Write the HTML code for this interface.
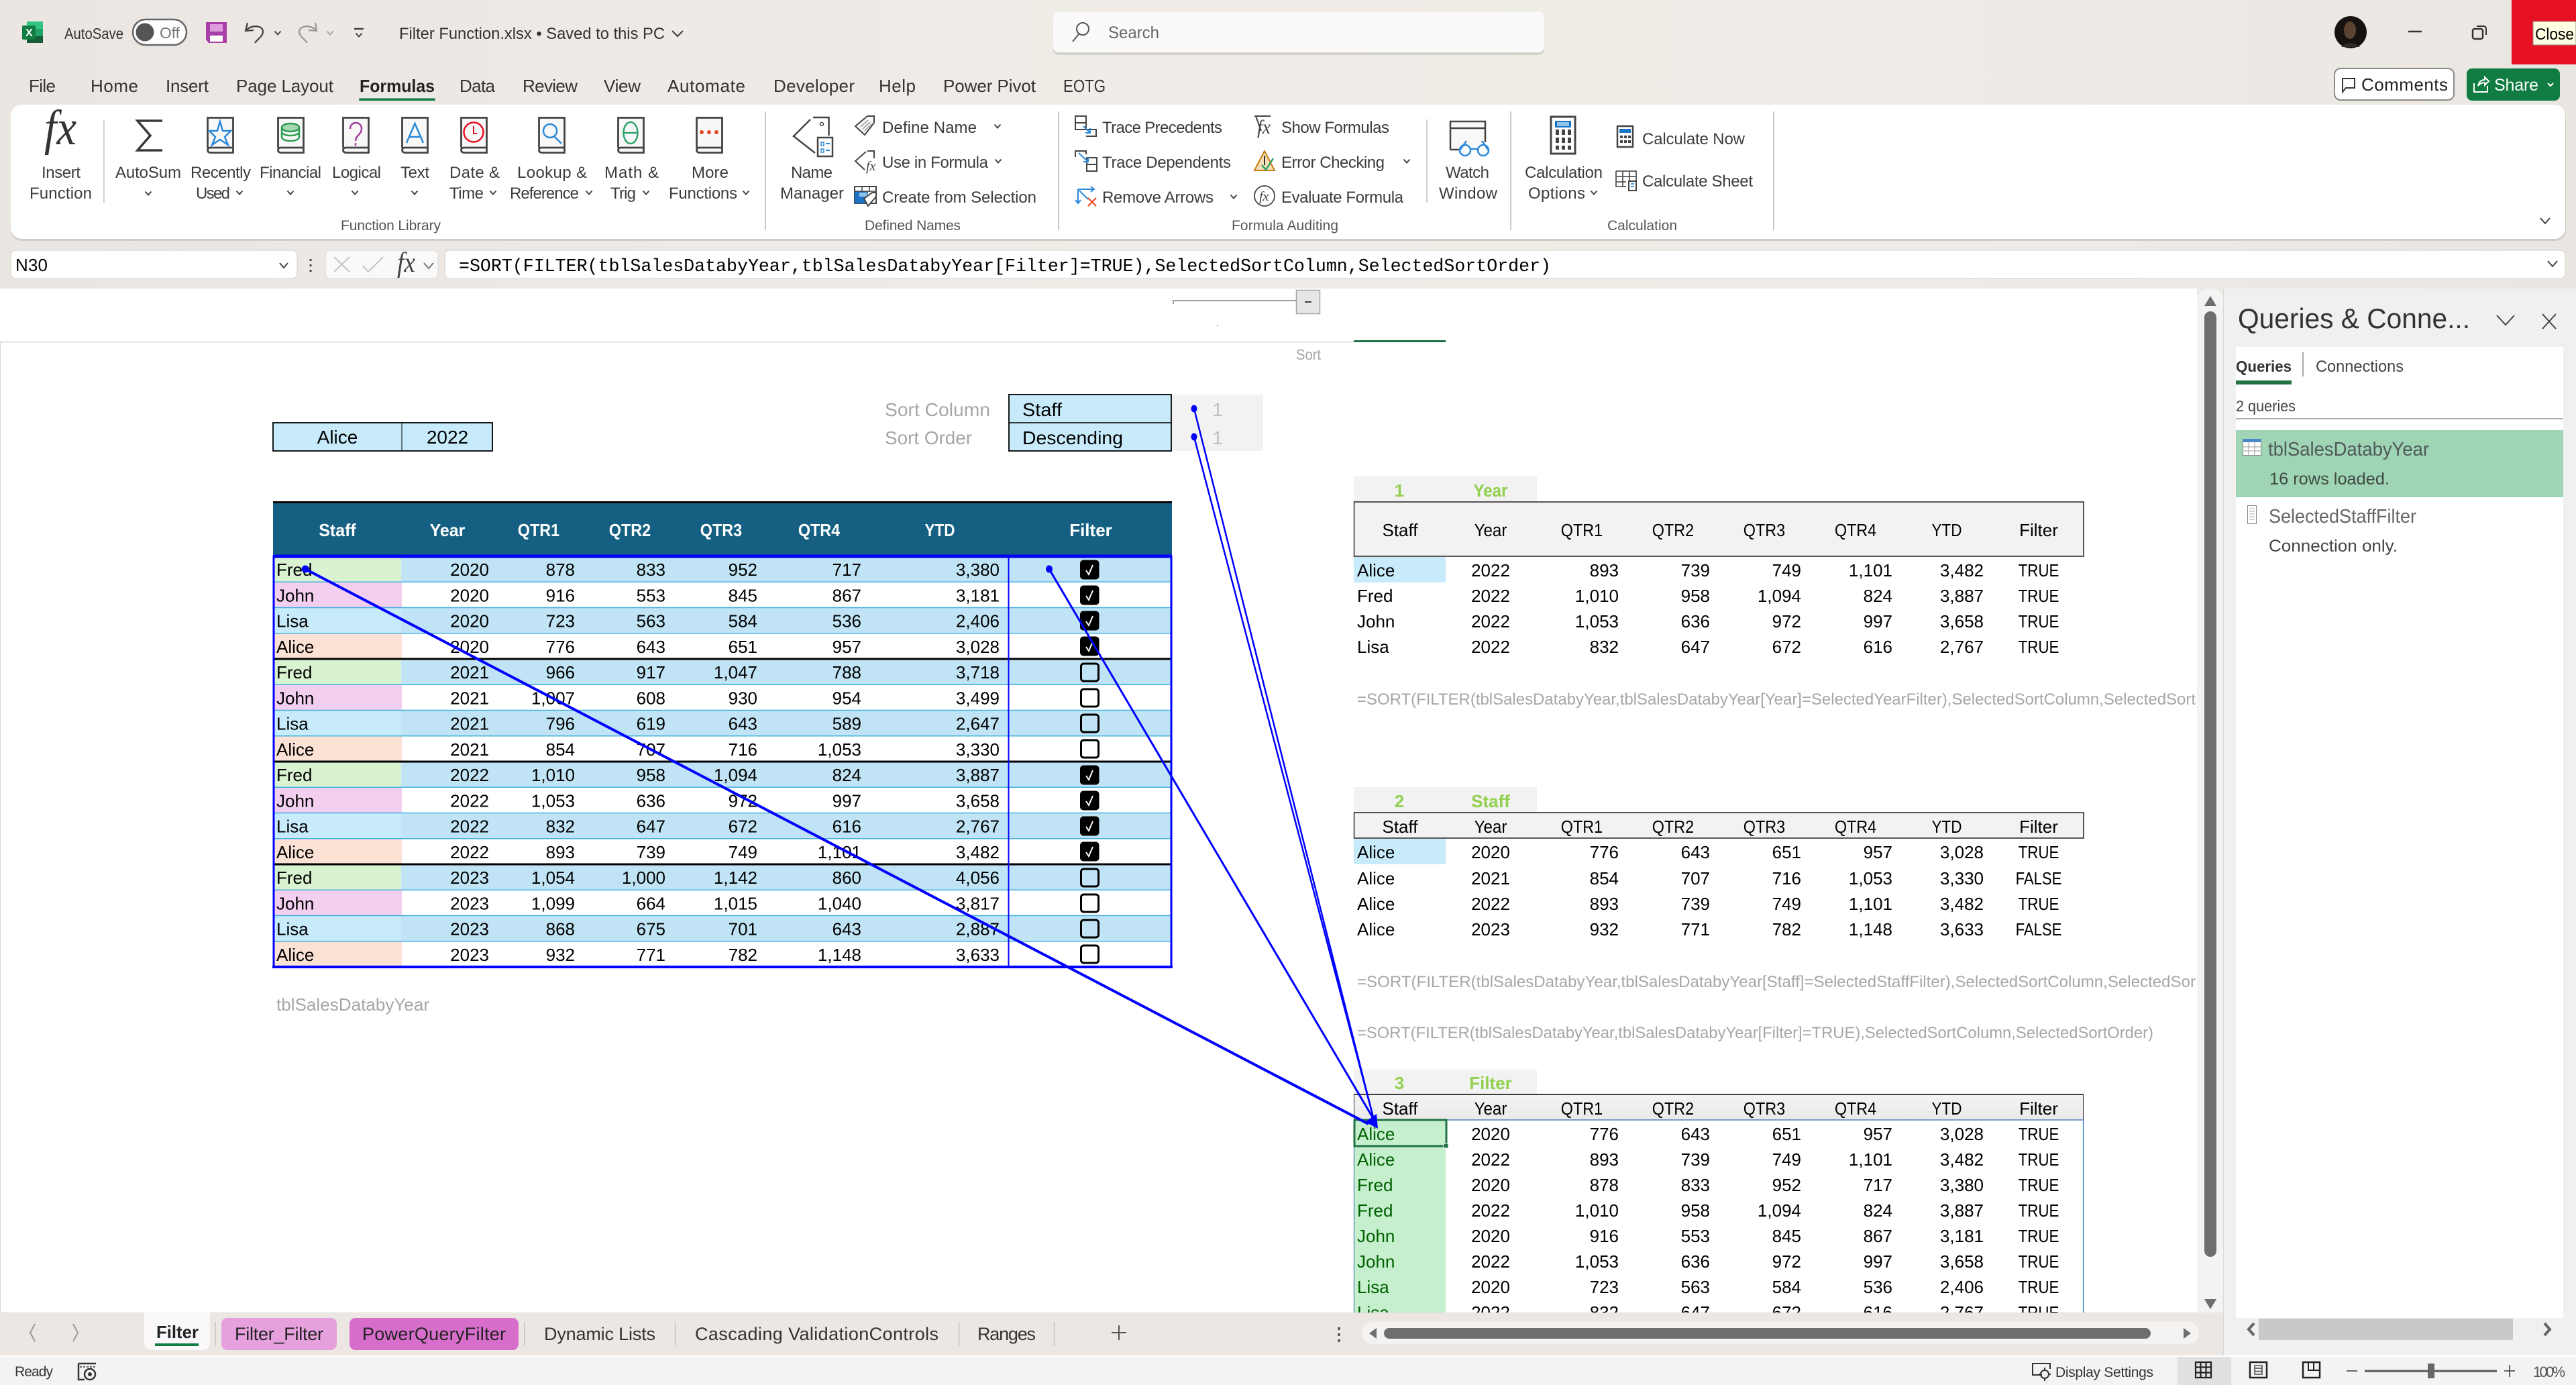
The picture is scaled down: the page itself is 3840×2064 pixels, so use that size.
<!DOCTYPE html>
<html lang="en"><head><meta charset="utf-8"><title>Filter Function.xlsx</title>
<style>
html,body{margin:0;padding:0;background:#fff;width:3840px;height:2064px;overflow:hidden}
svg{display:block}
text{font-family:"Liberation Sans",sans-serif;fill:#000;font-size:26px;white-space:pre}
.r{text-anchor:end}.c{text-anchor:middle}.b{font-weight:700}
.w{fill:#fff}
.u text,text.u{font-size:24px;fill:#3c3c3c}
.t text{font-size:26px;fill:#333}
.g text{font-size:21px;fill:#555}
.s text{font-size:27px;fill:#333}
.gy{fill:#a6a6a6}.lg{fill:#bfbfbf}.gn{fill:#92d050;font-weight:700}
.dk{fill:#006100}
.ic{fill:none;stroke:#444;stroke-width:2.5}
.bl{fill:none;stroke:#2b88d8;stroke-width:2.5}
.q,.q2,.q3,.q4,.q5,.q6{transform-box:fill-box;transform-origin:center}
.q{transform:scaleX(.9)}.q2{transform:scaleX(.865)}.q3{transform:scaleX(.86)}.q4{transform:scaleX(.85)}.q5{transform:scaleX(.93)}.q6{transform:scaleX(.96)}
.f28{font-size:28px}
</style></head><body>
<svg xmlns="http://www.w3.org/2000/svg" width="3840" height="2064" viewBox="0 0 3840 2064">
<defs>
<linearGradient id="bg" x1="0" x2="1" y1="0" y2="0"><stop offset="0" stop-color="#ebe6e2"/><stop offset=".45" stop-color="#f1ece7"/><stop offset=".75" stop-color="#f0ebe6"/><stop offset="1" stop-color="#eae6e2"/></linearGradient>
<linearGradient id="h3" x1="0" x2="0" y1="0" y2="1"><stop offset="0" stop-color="#f4f4f4"/><stop offset="1" stop-color="#e9e9e9"/></linearGradient>
<path id="ch" d="M-4.5 -2.5L0 2.5L4.5 -2.5" fill="none" stroke="#444" stroke-width="2"/>
<path id="book" d="M1.5 46V1.5H39.5V53.5H6Q1.5 53.5 1.5 49.5Q1.5 46 6 46H39.5" fill="#f8f8f8" stroke="#444" stroke-width="2.8"/>
<g id="on"><rect x="-14" y="-14.500" width="28.500" height="29" rx="5" fill="#000"/><path d="M-5 1L-1 7L5 -7" fill="none" stroke="#fff" stroke-width="2"/></g>
<rect id="off" x="-12.500" y="-13" width="26" height="26" rx="4" fill="none" stroke="#000" stroke-width="3"/>
<clipPath id="fc"><rect x="2018" y="1000" width="1255" height="500"/></clipPath>
<clipPath id="gc"><rect x="0" y="430" width="3275" height="1526"/></clipPath>
</defs>

<!-- chrome background -->
<rect width="3840" height="2064" fill="url(#bg)"/>

<!-- title bar -->
<rect x="40" y="32" width="24" height="11" fill="#33c481"/><rect x="40" y="43" width="24" height="11" fill="#21a366"/><rect x="40" y="54" width="24" height="10" fill="#185c37"/>
<rect x="33" y="38" width="20" height="21" rx="2" fill="#107c41"/><text x="38" y="54" class="b w" style="font-size:16px">X</text>
<text x="96" y="58" textLength="88" lengthAdjust="spacingAndGlyphs" style="font-size:23px;fill:#333">AutoSave</text>
<rect x="198" y="29" width="80" height="38" rx="19" fill="#fff" stroke="#666" stroke-width="2.500"/><circle cx="216" cy="48" r="13.500" fill="#555"/>
<text x="238" y="57" textLength="30" lengthAdjust="spacingAndGlyphs" style="font-size:23px;fill:#777">Off</text>
<path d="M307 33H338V64H311L307 59Z" fill="#a83fa8"/><rect x="313" y="36" width="19" height="11" fill="#dd9ddd"/><rect x="313" y="53" width="19" height="9" fill="#fff"/>
<path d="M369 34L366 46L378 45M367 45C376 36 392 38 392 47C392 54 384 58 380 64" fill="none" stroke="#444" stroke-width="2.300"/>
<use href="#ch" x="414" y="49"/>
<path d="M470 34L472 46L460 45M471 45C462 36 447 38 446 47C446 54 454 58 458 64" fill="none" stroke="#9a9a9a" stroke-width="2.300"/>
<use href="#ch" x="492" y="49" opacity=".4"/>
<path d="M528 43H542" stroke="#444" stroke-width="2.500"/><use href="#ch" x="535" y="52"/>
<text x="595" y="58" textLength="396" lengthAdjust="spacingAndGlyphs" style="font-size:24px;fill:#333">Filter Function.xlsx • Saved to this PC</text>
<path d="M1002 46L1010 54L1018 46" fill="none" stroke="#444" stroke-width="2.200"/>

<rect x="1570" y="20" width="732" height="62" rx="8" fill="#d5d2cf"/><rect x="1570" y="18" width="732" height="60" rx="8" fill="#fafafa"/>
<circle cx="1614" cy="43" r="9" fill="none" stroke="#555" stroke-width="2"/><path d="M1608 51L1599 62" stroke="#555" stroke-width="2"/>
<text x="1652" y="57" textLength="76" lengthAdjust="spacingAndGlyphs" style="font-size:25px;fill:#666">Search</text>

<circle cx="3504" cy="48" r="24" fill="#17120f"/><ellipse cx="3503" cy="45" rx="9" ry="13" fill="#5a4330"/><path d="M3490 70Q3504 58 3518 70" fill="#2f2a26"/>
<path d="M3590 47H3610" stroke="#333" stroke-width="2.500"/>
<rect x="3686" y="43" width="15" height="15" rx="3" fill="none" stroke="#333" stroke-width="2.500"/><path d="M3692 39H3702Q3706 39 3706 43V52" fill="none" stroke="#333" stroke-width="2"/>
<rect x="3744" width="96" height="96" fill="#e81123"/>
<rect x="3776" y="32" width="64" height="35" fill="#ffffe1" stroke="#8a8a8a"/><text x="3779" y="59" textLength="58" lengthAdjust="spacingAndGlyphs" style="font-size:24px">Close</text>

<!-- tabs -->
<g class="t">
<text x="43" y="137" textLength="40">File</text><text x="135" y="137" textLength="71">Home</text><text x="247" y="137" textLength="64">Insert</text><text x="352" y="137" textLength="145">Page Layout</text>
<text x="536" y="137" textLength="112" lengthAdjust="spacingAndGlyphs" class="b" style="fill:#222">Formulas</text><text x="685" y="137" textLength="53">Data</text><text x="779" y="137" textLength="82">Review</text><text x="900" y="137" textLength="55">View</text><text x="995" y="137" textLength="116">Automate</text><text x="1153" y="137" textLength="121">Developer</text><text x="1310" y="137" textLength="55">Help</text><text x="1406" y="137" textLength="138">Power Pivot</text><text x="1585" y="137" textLength="63" lengthAdjust="spacingAndGlyphs">EOTG</text>
</g>
<rect x="535" y="146.500" width="114" height="3.500" rx="1.500" fill="#107c41"/>

<rect x="3480" y="102" width="178" height="47" rx="9" fill="#fff" stroke="#8a8a8a" stroke-width="2"/>
<path d="M3491 117H3510V131H3497L3492 137V117Z" fill="none" stroke="#333" stroke-width="2"/>
<text x="3520" y="135" textLength="129" style="font-size:26px;fill:#222">Comments</text>
<rect x="3677" y="102" width="139" height="48" rx="8" fill="#107c41"/>
<path d="M3688 124V137H3708V128M3694 128Q3696 119 3704 119V115L3710 121L3704 127V123Q3698 123 3694 128Z" fill="none" stroke="#fff" stroke-width="2"/>
<text x="3718" y="135" textLength="66" class="w" style="font-size:25px">Share</text>
<path d="M3798 124L3802 128L3806 124" fill="none" stroke="#fff" stroke-width="2"/>

<!-- ribbon -->
<rect x="16" y="158" width="3809" height="201" rx="16" fill="#d0ccc8"/>
<rect x="16" y="156" width="3808" height="200" rx="16" fill="#fff"/>
<path d="M3787 325L3794 333L3801 325" fill="none" stroke="#444" stroke-width="2"/>
<path d="M155 178V302M2127 178V302" stroke="#d0d0d0" stroke-width="2"/>
<path d="M1141 166V343M1578 166V343M2252 166V343M2644 166V343" stroke="#c8c8c8" stroke-width="2"/>

<text x="66" y="215" textLength="48" lengthAdjust="spacingAndGlyphs" style="font-family:'Liberation Serif',serif;font-style:italic;font-size:74px;fill:#333">fx</text>
<path d="M242 180H205L224 202L205 224H242" fill="none" stroke="#3a3a3a" stroke-width="3.500"/>
<use href="#book" x="308" y="174"/><use href="#book" x="413" y="174"/><use href="#book" x="510" y="174"/><use href="#book" x="598" y="174"/><use href="#book" x="686" y="174"/><use href="#book" x="802" y="174"/><use href="#book" x="920" y="174"/><use href="#book" x="1037" y="174"/>
<path d="M328 181L332 195L344 195L335 204L340 216L328 208L316 216L321 204L312 195L324 195Z" class="bl"/>
<ellipse cx="433" cy="190" rx="13" ry="6" fill="#a5d6b0" stroke="#2a9d4f" stroke-width="2.500"/><path d="M420 190V196C420 204 446 204 446 196V190M420 198V204C420 212 446 212 446 204V198" fill="none" stroke="#2a9d4f" stroke-width="2.500"/>
<path d="M522 192C522 180 539 180 539 192C539 200 530 202 530 210M530 213V217" fill="none" stroke="#a33ea1" stroke-width="2.500"/>
<path d="M606 213L618.500 184L631 213M610 204H627" class="bl"/>
<circle cx="706" cy="197" r="14.500" fill="none" stroke="#e81123" stroke-width="2.500"/><path d="M706 188V199H711" fill="none" stroke="#e81123" stroke-width="2"/>
<circle cx="820" cy="195" r="10" class="bl"/><path d="M826 203L837 214" class="bl"/>
<ellipse cx="940" cy="198" rx="10.500" ry="16" fill="none" stroke="#2ea36a" stroke-width="2.500"/><path d="M929 198H951" stroke="#2ea36a" stroke-width="2.500"/>
<circle cx="1046" cy="197" r="3" fill="#e04a2a"/><circle cx="1057" cy="197" r="3" fill="#e04a2a"/><circle cx="1068" cy="197" r="3" fill="#e04a2a"/>

<g class="u">
<text x="62" y="265" textLength="58">Insert</text><text x="44" y="296" textLength="93">Function</text>
<text x="172" y="265" textLength="98">AutoSum</text>
<text x="284" y="265" textLength="90">Recently</text><text x="292" y="296" textLength="51">Used</text>
<text x="387" y="265" textLength="92">Financial</text><text x="495" y="265" textLength="73">Logical</text><text x="597" y="265" textLength="43">Text</text>
<text x="670" y="265" textLength="75">Date &amp;</text><text x="670" y="296" textLength="51">Time</text>
<text x="771" y="265" textLength="104">Lookup &amp;</text><text x="760" y="296" textLength="103">Reference</text>
<text x="901" y="265" textLength="81">Math &amp;</text><text x="910" y="296" textLength="38">Trig</text>
<text x="1031" y="265" textLength="55">More</text><text x="997" y="296" textLength="102">Functions</text>
<text x="1179" y="265" textLength="62">Name</text><text x="1163" y="296" textLength="95">Manager</text>
<text x="1315" y="198" textLength="141">Define Name</text><text x="1315" y="250" textLength="158">Use in Formula</text><text x="1315" y="302" textLength="230">Create from Selection</text>
<text x="1643" y="198" textLength="179">Trace Precedents</text><text x="1643" y="250" textLength="192">Trace Dependents</text><text x="1643" y="302" textLength="166">Remove Arrows</text>
<text x="1910" y="198" textLength="161">Show Formulas</text><text x="1910" y="250" textLength="154">Error Checking</text><text x="1910" y="302" textLength="182">Evaluate Formula</text>
<text x="2155" y="265" textLength="65">Watch</text><text x="2145" y="296" textLength="87">Window</text>
<text x="2273" y="265" textLength="116">Calculation</text><text x="2278" y="296" textLength="85">Options</text>
<text x="2448" y="215" textLength="153">Calculate Now</text><text x="2448" y="278" textLength="165">Calculate Sheet</text>
</g>
<g class="g">
<text x="508" y="343" textLength="149">Function Library</text><text x="1289" y="343" textLength="143">Defined Names</text><text x="1836" y="343" textLength="159">Formula Auditing</text><text x="2396" y="343" textLength="104">Calculation</text>
</g>
<use href="#ch" x="221" y="288"/><use href="#ch" x="357" y="287"/><use href="#ch" x="433" y="287"/><use href="#ch" x="529" y="287"/><use href="#ch" x="618" y="287"/><use href="#ch" x="735" y="287"/><use href="#ch" x="878" y="287"/><use href="#ch" x="963" y="287"/><use href="#ch" x="1112" y="287"/>
<use href="#ch" x="1487" y="188"/><use href="#ch" x="1488" y="240"/><use href="#ch" x="1839" y="293"/><use href="#ch" x="2097" y="240"/><use href="#ch" x="2376" y="287"/>

<!-- Name Manager icon -->
<path d="M1212 175H1235.500V202M1208 178L1183 203L1215 228" class="ic"/><circle cx="1225" cy="185" r="2.500" class="ic" style="stroke-width:1.500"/>
<rect x="1219" y="205" width="22" height="28" fill="#fff" stroke="#444" stroke-width="2.500"/><path d="M1224 212h4v5h-4zM1224 222h4v5h-4z" fill="none" stroke="#2b88d8" stroke-width="1.500"/><path d="M1231 214h6M1231 224h6" stroke="#2b88d8" stroke-width="2"/>
<!-- Defined names small icons -->
<path d="M1275 188L1293 173H1303V183L1289 201Z" fill="#f5f5f5" stroke="#444" stroke-width="2"/><path d="M1283 189L1294 179M1286 192L1297 182M1289 195L1299 185" stroke="#999" stroke-width="1.500"/>
<path d="M1291 226L1275 240L1289 253M1293 225H1303V236" class="ic" style="stroke-width:2"/>
<text x="1291" y="254" style="font-family:'Liberation Serif',serif;font-style:italic;font-size:20px;fill:#444">fx</text>
<rect x="1274" y="278" width="32" height="25" fill="#fff" stroke="#444" stroke-width="2"/><rect x="1274" y="285" width="20" height="18" fill="#1b75c4"/><rect x="1281" y="287" width="12" height="6" fill="#8fc3ea"/><path d="M1285 278V286M1296 278V286M1274 285H1306" stroke="#444" stroke-width="1.500"/>
<path d="M1288 296L1300 287H1306V293L1294 307Z" fill="#fff" stroke="#444" stroke-width="2"/>
<!-- Auditing icons -->
<path d="M1603 173H1619V193H1603ZM1603 183H1619M1620 193H1634V203H1619" fill="none" stroke="#444" stroke-width="2"/><path d="M1615 188L1625 198M1625 191V198H1618" fill="none" stroke="#2b88d8" stroke-width="2"/>
<path d="M1603 234V225H1619V230M1620 235H1635V255H1620ZM1620 245H1635" fill="none" stroke="#444" stroke-width="2"/><path d="M1608 228L1622 241M1622 234V241H1615" fill="none" stroke="#2b88d8" stroke-width="2"/>
<path d="M1607 282V302M1603 298L1607 303L1611 298M1607 282H1630M1626 278L1631 282L1626 286M1609 284L1622 297" fill="none" stroke="#2b88d8" stroke-width="2"/><path d="M1622 295L1634 307M1634 295L1622 307" stroke="#e8401c" stroke-width="2"/>
<path d="M1870 173H1894M1872 173L1880 195" stroke="#444" stroke-width="2" fill="none"/><text x="1874" y="199" textLength="20" lengthAdjust="spacingAndGlyphs" style="font-family:'Liberation Serif',serif;font-style:italic;font-size:30px;fill:#444">fx</text>
<path d="M1885 225L1870 254H1900Z" fill="#f6dfb8" stroke="#c77d11" stroke-width="2"/><path d="M1885 232V246" stroke="#333" stroke-width="2"/><path d="M1881 246L1887 253L1898 236" fill="none" stroke="#2ea36a" stroke-width="2.500"/>
<circle cx="1885" cy="292" r="15" class="ic" style="stroke-width:1.800"/><text x="1877" y="299" style="font-family:'Liberation Serif',serif;font-style:italic;font-size:20px;fill:#444">fx</text>
<!-- watch -->
<path d="M2162 223V181H2214V212M2162 191H2214" fill="#f8f8f8" stroke="#444" stroke-width="2.500"/>
<path d="M2162 223H2176" stroke="#444" stroke-width="2.500"/>
<circle cx="2184" cy="224" r="8" class="bl"/><circle cx="2211" cy="224" r="8" class="bl"/><path d="M2176 224L2186 210M2219 224L2209 210M2192 222H2203" class="bl"/>
<!-- calc -->
<rect x="2312" y="174" width="36" height="55" fill="#fff" stroke="#444" stroke-width="3"/><rect x="2318" y="180" width="24" height="10" fill="#1b75c4"/><rect x="2321" y="182" width="18" height="6" fill="#8fc3ea"/>
<path d="M2319 193h5v8h-5zM2328 193h5v8h-5zM2337 193h5v8h-5zM2319 205h5v8h-5zM2328 205h5v8h-5zM2337 205h5v8h-5zM2319 217h5v6h-5zM2328 217h5v6h-5zM2337 217h5v6h-5z" fill="#444"/>
<rect x="2411" y="188" width="23" height="31" fill="#fff" stroke="#444" stroke-width="2.500"/><rect x="2414" y="192" width="17" height="6" fill="#1b75c4"/><path d="M2415 202h4v4h-4zM2421 202h4v4h-4zM2427 202h4v4h-4zM2415 209h4v4h-4zM2421 209h4v4h-4zM2427 209h4v4h-4z" fill="#444"/>
<path d="M2409 255H2439V270M2409 255V278H2424M2409 263H2439M2409 271H2424M2419 255V278M2429 255V270" fill="none" stroke="#555" stroke-width="1.800"/><rect x="2428" y="270" width="11" height="14" fill="#fff" stroke="#444" stroke-width="2"/><path d="M2431 274h5M2431 278h5" stroke="#2b88d8" stroke-width="1.800"/>

<!-- formula bar -->
<rect x="16" y="373" width="427" height="42" rx="7" fill="#fff" stroke="#d2d0ce"/>
<text x="23" y="404" textLength="48" style="font-size:26px">N30</text>
<path d="M417 392L423 399L429 392" fill="none" stroke="#444" stroke-width="2"/>
<path d="M463 386V389M463 394V397M463 402V405" stroke="#444" stroke-width="3"/>
<rect x="485" y="373" width="168" height="42" rx="7" fill="#f9f9f9" stroke="#d8d6d4"/>
<path d="M498 383L521 405M521 383L498 405" stroke="#c4c4c4" stroke-width="2"/><path d="M541 396L549 405L571 383" fill="none" stroke="#c4c4c4" stroke-width="2"/>
<text x="592" y="405" textLength="27" lengthAdjust="spacingAndGlyphs" style="font-family:'Liberation Serif',serif;font-style:italic;font-size:42px;fill:#444">fx</text>
<path d="M632 392L639 400L646 392" fill="none" stroke="#777" stroke-width="2"/>
<rect x="663" y="373" width="3161" height="42" rx="7" fill="#fff" stroke="#d2d0ce"/>
<text x="684" y="404" textLength="1628" style="font-family:'Liberation Mono',monospace;font-size:26.600px">=SORT(FILTER(tblSalesDatabyYear,tblSalesDatabyYear[Filter]=TRUE),SelectedSortColumn,SelectedSortOrder)</text>
<path d="M3798 389L3805 397L3812 389" fill="none" stroke="#444" stroke-width="2"/>

<!-- grid -->
<rect x="0" y="430" width="3275" height="1526" fill="#fff"/>
<path d="M0.500 509V1956" stroke="#d8d8d8"/>
<path d="M0 509.500H2018" stroke="#dcdcdc" stroke-width="1.800"/><rect x="2018" y="507" width="137" height="3" fill="#1e7145"/>
<path d="M1749 453V448H1932" fill="none" stroke="#a0a0a0" stroke-width="2"/>
<rect x="1932.500" y="432.500" width="35" height="35" fill="#e6e6e6" stroke="#a6a6a6" stroke-width="1.500"/><path d="M1945 450H1955" stroke="#444" stroke-width="2"/>
<rect x="1814" y="484" width="2" height="2" fill="#aaa"/>
<text x="1932" y="536" textLength="37" lengthAdjust="spacingAndGlyphs" class="gy" style="font-size:22px">Sort</text>

<!-- selectors -->
<rect x="407" y="630" width="327" height="42" fill="#c8ebfb" stroke="#000" stroke-width="1.800"/><path d="M599 630V672" stroke="#000"/>
<text x="503" y="661" class="c f28">Alice</text><text x="667" y="661" class="c f28">2022</text>
<text x="1319" y="620" textLength="157" lengthAdjust="spacingAndGlyphs" class="gy f28">Sort Column</text><text x="1319" y="662" textLength="130" lengthAdjust="spacingAndGlyphs" class="gy f28">Sort Order</text>
<rect x="1746" y="588" width="137" height="84" fill="#f2f2f2"/>
<rect x="1504" y="588" width="242" height="84" fill="#c8ebfb" stroke="#000" stroke-width="1.800"/><path d="M1504 630H1746" stroke="#000" stroke-width="1.500"/>
<text x="1524" y="620" textLength="59" lengthAdjust="spacingAndGlyphs" class="f28">Staff</text><text x="1524" y="662" textLength="150" lengthAdjust="spacingAndGlyphs" class="f28">Descending</text>
<text x="1815" y="620" class="c lg f28">1</text><text x="1815" y="662" class="c lg f28">1</text>

<!-- main table -->
<rect x="407" y="747" width="1340" height="82" fill="#156082"/><path d="M407 748.500H1747" stroke="#000" stroke-width="3"/>
<g><text x="503" y="799" class="c w b q6">Staff</text><text x="667" y="799" class="c w b q6">Year</text><text x="803" y="799" class="c w b q">QTR1</text><text x="939" y="799" class="c w b q">QTR2</text><text x="1075" y="799" class="c w b q">QTR3</text><text x="1221" y="799" class="c w b q">QTR4</text><text x="1401" y="799" class="c w b q2">YTD</text><text x="1626" y="799" class="c w b">Filter</text></g>

<!-- row backgrounds -->
<g fill="#c0e4f5"><rect x="598" y="829" width="1149" height="38.250"/><rect x="598" y="905.500" width="1149" height="38.250"/><rect x="598" y="982" width="1149" height="38.250"/><rect x="598" y="1058.500" width="1149" height="38.250"/><rect x="598" y="1135" width="1149" height="38.250"/><rect x="598" y="1211.500" width="1149" height="38.250"/><rect x="598" y="1288" width="1149" height="38.250"/><rect x="598" y="1364.500" width="1149" height="38.250"/></g>
<g fill="#d9f2d0"><rect x="407" y="829" width="191" height="38.250"/><rect x="407" y="982" width="191" height="38.250"/><rect x="407" y="1135" width="191" height="38.250"/><rect x="407" y="1288" width="191" height="38.250"/></g>
<g fill="#f2ceef"><rect x="407" y="867.250" width="192" height="38.250"/><rect x="407" y="1020.250" width="192" height="38.250"/><rect x="407" y="1173.250" width="192" height="38.250"/><rect x="407" y="1326.250" width="192" height="38.250"/></g>
<g fill="#c8ebfb"><rect x="407" y="905.500" width="191" height="38.250"/><rect x="407" y="1058.500" width="191" height="38.250"/><rect x="407" y="1211.500" width="191" height="38.250"/><rect x="407" y="1364.500" width="191" height="38.250"/></g>
<g fill="#fbe2d5"><rect x="407" y="943.750" width="192" height="38.250"/><rect x="407" y="1096.750" width="192" height="38.250"/><rect x="407" y="1249.750" width="192" height="38.250"/><rect x="407" y="1402.750" width="192" height="38.250"/></g>
<path d="M407 867.250H1747M407 905.500H1747M407 943.750H1747M407 1020.250H1747M407 1058.500H1747M407 1096.750H1747M407 1173.250H1747M407 1211.500H1747M407 1249.750H1747M407 1326.250H1747M407 1364.500H1747M407 1402.750H1747" stroke="#45b0e1" stroke-width="1.500"/>
<path d="M407 982H1747M407 1135H1747M407 1288H1747" stroke="#000" stroke-width="3"/>

<g transform="translate(0,858)"><text x="412">Fred</text><text class="r" x="729">2020</text><text class="r" x="857">878</text><text class="r" x="992">833</text><text class="r" x="1129">952</text><text class="r" x="1284">717</text><text class="r" x="1490">3,380</text></g>
<g transform="translate(0,896.250)"><text x="412">John</text><text class="r" x="729">2020</text><text class="r" x="857">916</text><text class="r" x="992">553</text><text class="r" x="1129">845</text><text class="r" x="1284">867</text><text class="r" x="1490">3,181</text></g>
<g transform="translate(0,934.500)"><text x="412">Lisa</text><text class="r" x="729">2020</text><text class="r" x="857">723</text><text class="r" x="992">563</text><text class="r" x="1129">584</text><text class="r" x="1284">536</text><text class="r" x="1490">2,406</text></g>
<g transform="translate(0,972.750)"><text x="412">Alice</text><text class="r" x="729">2020</text><text class="r" x="857">776</text><text class="r" x="992">643</text><text class="r" x="1129">651</text><text class="r" x="1284">957</text><text class="r" x="1490">3,028</text></g>
<g transform="translate(0,1011)"><text x="412">Fred</text><text class="r" x="729">2021</text><text class="r" x="857">966</text><text class="r" x="992">917</text><text class="r" x="1129">1,047</text><text class="r" x="1284">788</text><text class="r" x="1490">3,718</text></g>
<g transform="translate(0,1049.250)"><text x="412">John</text><text class="r" x="729">2021</text><text class="r" x="857">1,007</text><text class="r" x="992">608</text><text class="r" x="1129">930</text><text class="r" x="1284">954</text><text class="r" x="1490">3,499</text></g>
<g transform="translate(0,1087.500)"><text x="412">Lisa</text><text class="r" x="729">2021</text><text class="r" x="857">796</text><text class="r" x="992">619</text><text class="r" x="1129">643</text><text class="r" x="1284">589</text><text class="r" x="1490">2,647</text></g>
<g transform="translate(0,1125.750)"><text x="412">Alice</text><text class="r" x="729">2021</text><text class="r" x="857">854</text><text class="r" x="992">707</text><text class="r" x="1129">716</text><text class="r" x="1284">1,053</text><text class="r" x="1490">3,330</text></g>
<g transform="translate(0,1164)"><text x="412">Fred</text><text class="r" x="729">2022</text><text class="r" x="857">1,010</text><text class="r" x="992">958</text><text class="r" x="1129">1,094</text><text class="r" x="1284">824</text><text class="r" x="1490">3,887</text></g>
<g transform="translate(0,1202.250)"><text x="412">John</text><text class="r" x="729">2022</text><text class="r" x="857">1,053</text><text class="r" x="992">636</text><text class="r" x="1129">972</text><text class="r" x="1284">997</text><text class="r" x="1490">3,658</text></g>
<g transform="translate(0,1240.500)"><text x="412">Lisa</text><text class="r" x="729">2022</text><text class="r" x="857">832</text><text class="r" x="992">647</text><text class="r" x="1129">672</text><text class="r" x="1284">616</text><text class="r" x="1490">2,767</text></g>
<g transform="translate(0,1278.750)"><text x="412">Alice</text><text class="r" x="729">2022</text><text class="r" x="857">893</text><text class="r" x="992">739</text><text class="r" x="1129">749</text><text class="r" x="1284">1,101</text><text class="r" x="1490">3,482</text></g>
<g transform="translate(0,1317)"><text x="412">Fred</text><text class="r" x="729">2023</text><text class="r" x="857">1,054</text><text class="r" x="992">1,000</text><text class="r" x="1129">1,142</text><text class="r" x="1284">860</text><text class="r" x="1490">4,056</text></g>
<g transform="translate(0,1355.250)"><text x="412">John</text><text class="r" x="729">2023</text><text class="r" x="857">1,099</text><text class="r" x="992">664</text><text class="r" x="1129">1,015</text><text class="r" x="1284">1,040</text><text class="r" x="1490">3,817</text></g>
<g transform="translate(0,1393.500)"><text x="412">Lisa</text><text class="r" x="729">2023</text><text class="r" x="857">868</text><text class="r" x="992">675</text><text class="r" x="1129">701</text><text class="r" x="1284">643</text><text class="r" x="1490">2,887</text></g>
<g transform="translate(0,1431.750)"><text x="412">Alice</text><text class="r" x="729">2023</text><text class="r" x="857">932</text><text class="r" x="992">771</text><text class="r" x="1129">782</text><text class="r" x="1284">1,148</text><text class="r" x="1490">3,633</text></g>

<use href="#on" x="1624" y="849"/><use href="#on" x="1624" y="887"/><use href="#on" x="1624" y="925"/><use href="#on" x="1624" y="963"/>
<use href="#off" x="1624" y="1002"/><use href="#off" x="1624" y="1040"/><use href="#off" x="1624" y="1078"/><use href="#off" x="1624" y="1116"/>
<use href="#on" x="1624" y="1155"/><use href="#on" x="1624" y="1193"/><use href="#on" x="1624" y="1231"/><use href="#on" x="1624" y="1269"/>
<use href="#off" x="1624" y="1308"/><use href="#off" x="1624" y="1346"/><use href="#off" x="1624" y="1384"/><use href="#off" x="1624" y="1422"/>

<rect x="408" y="829" width="1338" height="612" fill="none" stroke="#0000ff" stroke-width="3"/>
<path d="M407 829H1747" stroke="#0000ff" stroke-width="5"/><path d="M406 1441H1748" stroke="#0000ff" stroke-width="4"/><path d="M1503.500 829V1441" stroke="#0000ff" stroke-width="2"/>
<text x="412" y="1506" textLength="228" class="gy">tblSalesDatabyYear</text>

<!-- right tables -->
<rect x="2018" y="710" width="273" height="38" fill="#f2f2f2"/><text x="2086" y="740" class="c gn">1</text><text x="2222" y="740" class="c gn q5">Year</text>
<rect x="2018.500" y="748" width="1087.500" height="81" fill="#f2f2f2" stroke="#000" stroke-width="1.300"/>
<g transform="translate(0,799)"><text class="c" x="2087">Staff</text><text class="c q5" x="2222">Year</text><text class="c q" x="2358">QTR1</text><text class="c q" x="2494">QTR2</text><text class="c q" x="2630">QTR3</text><text class="c q" x="2766">QTR4</text><text class="c q2" x="2902">YTD</text><text class="c" x="3039">Filter</text></g>
<rect x="2018" y="830" width="137" height="38" fill="#c8ebfb"/>
<g transform="translate(0,859)"><text x="2023">Alice</text><text class="c" x="2222">2022</text><text class="r" x="2413">893</text><text class="r" x="2549">739</text><text class="r" x="2685">749</text><text class="r" x="2821">1,101</text><text class="r" x="2957">3,482</text><text class="c q3" x="3039">TRUE</text></g>
<g transform="translate(0,897)"><text x="2023">Fred</text><text class="c" x="2222">2022</text><text class="r" x="2413">1,010</text><text class="r" x="2549">958</text><text class="r" x="2685">1,094</text><text class="r" x="2821">824</text><text class="r" x="2957">3,887</text><text class="c q3" x="3039">TRUE</text></g>
<g transform="translate(0,935)"><text x="2023">John</text><text class="c" x="2222">2022</text><text class="r" x="2413">1,053</text><text class="r" x="2549">636</text><text class="r" x="2685">972</text><text class="r" x="2821">997</text><text class="r" x="2957">3,658</text><text class="c q3" x="3039">TRUE</text></g>
<g transform="translate(0,973)"><text x="2023">Lisa</text><text class="c" x="2222">2022</text><text class="r" x="2413">832</text><text class="r" x="2549">647</text><text class="r" x="2685">672</text><text class="r" x="2821">616</text><text class="r" x="2957">2,767</text><text class="c q3" x="3039">TRUE</text></g>

<g clip-path="url(#fc)">
<text x="2023" y="1050" textLength="1250" lengthAdjust="spacingAndGlyphs" class="gy" style="font-size:24px">=SORT(FILTER(tblSalesDatabyYear,tblSalesDatabyYear[Year]=SelectedYearFilter),SelectedSortColumn,SelectedSort</text>
<text x="2023" y="1471" textLength="1250" lengthAdjust="spacingAndGlyphs" class="gy" style="font-size:24px">=SORT(FILTER(tblSalesDatabyYear,tblSalesDatabyYear[Staff]=SelectedStaffFilter),SelectedSortColumn,SelectedSor</text>
</g>

<rect x="2018" y="1173" width="273" height="38" fill="#f2f2f2"/><text x="2086" y="1203" class="c gn">2</text><text x="2222" y="1203" class="c gn">Staff</text>
<rect x="2018.500" y="1211" width="1087.500" height="38" fill="#f2f2f2" stroke="#000" stroke-width="1.300"/>
<g transform="translate(0,1241)"><text class="c" x="2087">Staff</text><text class="c q5" x="2222">Year</text><text class="c q" x="2358">QTR1</text><text class="c q" x="2494">QTR2</text><text class="c q" x="2630">QTR3</text><text class="c q" x="2766">QTR4</text><text class="c q2" x="2902">YTD</text><text class="c" x="3039">Filter</text></g>
<rect x="2018" y="1250" width="137" height="38" fill="#c8ebfb"/>
<g transform="translate(0,1279)"><text x="2023">Alice</text><text class="c" x="2222">2020</text><text class="r" x="2413">776</text><text class="r" x="2549">643</text><text class="r" x="2685">651</text><text class="r" x="2821">957</text><text class="r" x="2957">3,028</text><text class="c q3" x="3039">TRUE</text></g>
<g transform="translate(0,1318)"><text x="2023">Alice</text><text class="c" x="2222">2021</text><text class="r" x="2413">854</text><text class="r" x="2549">707</text><text class="r" x="2685">716</text><text class="r" x="2821">1,053</text><text class="r" x="2957">3,330</text><text class="c q4" x="3039">FALSE</text></g>
<g transform="translate(0,1356)"><text x="2023">Alice</text><text class="c" x="2222">2022</text><text class="r" x="2413">893</text><text class="r" x="2549">739</text><text class="r" x="2685">749</text><text class="r" x="2821">1,101</text><text class="r" x="2957">3,482</text><text class="c q3" x="3039">TRUE</text></g>
<g transform="translate(0,1394)"><text x="2023">Alice</text><text class="c" x="2222">2023</text><text class="r" x="2413">932</text><text class="r" x="2549">771</text><text class="r" x="2685">782</text><text class="r" x="2821">1,148</text><text class="r" x="2957">3,633</text><text class="c q4" x="3039">FALSE</text></g>

<text x="2023" y="1547" textLength="1187" lengthAdjust="spacingAndGlyphs" class="gy" style="font-size:24px">=SORT(FILTER(tblSalesDatabyYear,tblSalesDatabyYear[Filter]=TRUE),SelectedSortColumn,SelectedSortOrder)</text>

<rect x="2018" y="1594" width="273" height="37" fill="#f2f2f2"/><text x="2086" y="1623" class="c gn">3</text><text x="2222" y="1623" class="c gn">Filter</text>
<g clip-path="url(#gc)">
<rect x="2019" y="1631" width="1087" height="38" fill="url(#h3)"/>
<path d="M2018 1631H3106" stroke="#000" stroke-width="1.500"/><path d="M2018 1669H3106M2018.500 1669V1956M3105.500 1669V1956" stroke="#2f6fb7" stroke-width="1.200"/>
<path d="M2018.500 1631V1669M3105.500 1631V1669" stroke="#333"/>
<g transform="translate(0,1661)"><text class="c" x="2087">Staff</text><text class="c q5" x="2222">Year</text><text class="c q" x="2358">QTR1</text><text class="c q" x="2494">QTR2</text><text class="c q" x="2630">QTR3</text><text class="c q" x="2766">QTR4</text><text class="c q2" x="2902">YTD</text><text class="c" x="3039">Filter</text></g>
<rect x="2019" y="1670" width="136" height="286" fill="#c6efce"/>
<g transform="translate(0,1699)"><text x="2023" class="dk">Alice</text><text class="c" x="2222">2020</text><text class="r" x="2413">776</text><text class="r" x="2549">643</text><text class="r" x="2685">651</text><text class="r" x="2821">957</text><text class="r" x="2957">3,028</text><text class="c q3" x="3039">TRUE</text></g>
<g transform="translate(0,1737)"><text x="2023" class="dk">Alice</text><text class="c" x="2222">2022</text><text class="r" x="2413">893</text><text class="r" x="2549">739</text><text class="r" x="2685">749</text><text class="r" x="2821">1,101</text><text class="r" x="2957">3,482</text><text class="c q3" x="3039">TRUE</text></g>
<g transform="translate(0,1775)"><text x="2023" class="dk">Fred</text><text class="c" x="2222">2020</text><text class="r" x="2413">878</text><text class="r" x="2549">833</text><text class="r" x="2685">952</text><text class="r" x="2821">717</text><text class="r" x="2957">3,380</text><text class="c q3" x="3039">TRUE</text></g>
<g transform="translate(0,1813)"><text x="2023" class="dk">Fred</text><text class="c" x="2222">2022</text><text class="r" x="2413">1,010</text><text class="r" x="2549">958</text><text class="r" x="2685">1,094</text><text class="r" x="2821">824</text><text class="r" x="2957">3,887</text><text class="c q3" x="3039">TRUE</text></g>
<g transform="translate(0,1851)"><text x="2023" class="dk">John</text><text class="c" x="2222">2020</text><text class="r" x="2413">916</text><text class="r" x="2549">553</text><text class="r" x="2685">845</text><text class="r" x="2821">867</text><text class="r" x="2957">3,181</text><text class="c q3" x="3039">TRUE</text></g>
<g transform="translate(0,1889)"><text x="2023" class="dk">John</text><text class="c" x="2222">2022</text><text class="r" x="2413">1,053</text><text class="r" x="2549">636</text><text class="r" x="2685">972</text><text class="r" x="2821">997</text><text class="r" x="2957">3,658</text><text class="c q3" x="3039">TRUE</text></g>
<g transform="translate(0,1927)"><text x="2023" class="dk">Lisa</text><text class="c" x="2222">2020</text><text class="r" x="2413">723</text><text class="r" x="2549">563</text><text class="r" x="2685">584</text><text class="r" x="2821">536</text><text class="r" x="2957">2,406</text><text class="c q3" x="3039">TRUE</text></g>
<g transform="translate(0,1965)"><text x="2023" class="dk">Lisa</text><text class="c" x="2222">2022</text><text class="r" x="2413">832</text><text class="r" x="2549">647</text><text class="r" x="2685">672</text><text class="r" x="2821">616</text><text class="r" x="2957">2,767</text><text class="c q3" x="3039">TRUE</text></g>
<rect x="2019" y="1669" width="137" height="39" fill="none" stroke="#217346" stroke-width="3"/><rect x="2152" y="1704" width="7" height="7" fill="#217346" stroke="#fff"/>
</g>

<!-- tracer arrows -->
<g fill="none" stroke="#0000ff">
<path d="M1780 609L2047 1665" stroke-width="2.500"/><path d="M1780 651L2047 1665" stroke-width="2.500"/>
<path d="M1564 848L2046 1665" stroke-width="3"/><path d="M455 848L2040 1675" stroke-width="4"/>
</g>
<path d="M2054 1682L2035 1672L2052 1660Z" fill="#0000ff"/>
<g fill="#0000ff"><ellipse cx="1780" cy="609" rx="4.500" ry="5.500"/><ellipse cx="1780" cy="651" rx="4.500" ry="5.500"/><ellipse cx="1564" cy="848" rx="5" ry="5.500"/><ellipse cx="455" cy="848" rx="5.500" ry="5.500"/></g>

<!-- vertical scrollbar -->
<path d="M3275 1956V448Q3275 430 3295 430Q3314 430 3314 448V1956Z" fill="#f3f3f3"/>
<path d="M3295 441L3304 456H3286Z" fill="#6e6e6e"/>
<rect x="3286" y="464" width="18" height="1409" rx="9" fill="#6e6e6e"/>
<path d="M3295 1951L3304 1936H3286Z" fill="#6e6e6e"/>

<!-- panel -->
<rect x="3315" y="430" width="525" height="1590" fill="#f0f0f0"/><path d="M3314.500 430V2020" stroke="#d8d8d8"/>
<text x="3336" y="489" textLength="346" lengthAdjust="spacingAndGlyphs" style="font-size:42px;fill:#333">Queries &amp; Conne...</text>
<path d="M3722 470L3735 484L3748 470M3790 468L3810 490M3810 468L3790 490" fill="none" stroke="#444" stroke-width="2"/>
<rect x="3333" y="517" width="488" height="1447" fill="#fff"/>
<text x="3333" y="554" textLength="83" lengthAdjust="spacingAndGlyphs" class="b" style="font-size:23px;fill:#333">Queries</text>
<rect x="3333" y="567" width="83" height="6" fill="#217346"/>
<path d="M3433 525V561" stroke="#aaa" stroke-width="2"/>
<text x="3452" y="554" textLength="131" lengthAdjust="spacingAndGlyphs" style="font-size:24px;fill:#444">Connections</text>
<text x="3333" y="613" textLength="89" lengthAdjust="spacingAndGlyphs" style="font-size:23px;fill:#444">2 queries</text>
<path d="M3333 624H3821" stroke="#b0b0b0" stroke-width="2"/>
<rect x="3333" y="641" width="488" height="100" fill="#9fd5b4"/>
<rect x="3343.500" y="654.500" width="27" height="24" fill="#fff" stroke="#888"/><rect x="3343" y="654" width="28" height="5" fill="#4a86c8"/><path d="M3343 666H3371M3343 672H3371M3352 659V679M3361 659V679" stroke="#999"/>
<text x="3381" y="679" textLength="240" lengthAdjust="spacingAndGlyphs" style="font-size:29px;fill:#505a5a">tblSalesDatabyYear</text>
<text x="3383" y="722" textLength="179" lengthAdjust="spacingAndGlyphs" style="font-size:25px;fill:#3f4a45">16 rows loaded.</text>
<rect x="3350.500" y="753.500" width="13" height="27" fill="#fff" stroke="#888"/><path d="M3353 758H3361M3353 762H3361M3353 766H3361M3353 770H3361M3353 774H3361" stroke="#aaa"/>
<text x="3382" y="779" textLength="220" lengthAdjust="spacingAndGlyphs" style="font-size:29px;fill:#666">SelectedStaffFilter</text>
<text x="3382" y="822" textLength="192" lengthAdjust="spacingAndGlyphs" style="font-size:25px;fill:#444">Connection only.</text>
<rect x="3367" y="1965" width="379" height="32" fill="#c9c9c9"/>
<path d="M3360 1972L3352 1981L3360 1990M3793 1972L3801 1981L3793 1990" fill="none" stroke="#666" stroke-width="4"/>

<!-- sheet tabs -->
<rect x="0" y="1956" width="3314" height="64" fill="#ece7e2"/>
<path d="M0 1956.500H3275" stroke="#dedbd8"/>
<path d="M52 1973L45 1986L52 1999M109 1973L116 1986L109 1999" fill="none" stroke="#999" stroke-width="2"/>
<path d="M215 1956H313V2000Q313 2012 301 2012H227Q215 2012 215 2000Z" fill="#fbf8fa"/>
<text x="233" y="1994" textLength="63" lengthAdjust="spacingAndGlyphs" class="b" style="font-size:26px;fill:#222">Filter</text><rect x="231" y="2002" width="65" height="4" fill="#107c41"/>
<rect x="330" y="1964" width="172" height="48" rx="9" fill="#e6a0de"/>
<rect x="521" y="1964" width="252" height="48" rx="9" fill="#d86ecc"/>
<g class="s">
<text x="350" y="1997" textLength="132" style="fill:#222">Filter_Filter</text>
<text x="540" y="1997" textLength="214" style="fill:#222">PowerQueryFilter</text>
<text x="811" y="1997" textLength="166">Dynamic Lists</text>
<text x="1036" y="1997" textLength="363">Cascading ValidationControls</text>
<text x="1457" y="1997" textLength="87">Ranges</text>
</g>
<path d="M321 1970V2006M782 1970V2006M1006.500 1970V2006M1429.500 1970V2006M1571.500 1970V2006" stroke="#c8c4c0" stroke-width="1.500"/>
<path d="M1657 1986H1679M1668 1975V1997" stroke="#555" stroke-width="2"/>
<path d="M1996 1978V1982M1996 1987V1991M1996 1996V2000" stroke="#444" stroke-width="3"/>
<rect x="2030" y="1970" width="1248" height="33" rx="16" fill="#f4f3f2"/>
<path d="M2052 1979L2041 1987L2052 1995Z" fill="#6e6e6e"/>
<rect x="2063" y="1979" width="1143" height="16" rx="8" fill="#6e6e6e"/>
<path d="M3255 1979L3266 1987L3255 1995Z" fill="#6e6e6e"/>

<!-- status bar -->
<rect x="0" y="2020" width="3840" height="2" fill="#fff"/>
<rect x="0" y="2022" width="3840" height="42" fill="#f3f3f3"/>
<text x="22" y="2051" textLength="57" style="font-size:21px;fill:#333">Ready</text>
<path d="M117 2032H143M117 2032V2056H126" fill="none" stroke="#333" stroke-width="2.500"/><path d="M119 2037H143" stroke="#333" stroke-width="1.500" stroke-dasharray="3 2"/><circle cx="134" cy="2048" r="8" class="ic" style="stroke:#333"/><circle cx="134" cy="2048" r="3" fill="#333"/>
<path d="M3044 2049H3030V2032H3056V2040" fill="none" stroke="#333" stroke-width="2"/><circle cx="3048" cy="2048" r="6" class="ic" style="stroke:#333;stroke-width:2"/><path d="M3048 2038V2042M3048 2054V2058M3039 2048H3043M3053 2048H3057" stroke="#333" stroke-width="2"/>
<text x="3064" y="2052" textLength="146" style="font-size:21px;fill:#333">Display Settings</text>
<rect x="3246" y="2022" width="80" height="42" fill="#e0e0e0"/>
<path d="M3273 2030H3296V2053H3273ZM3273 2037.500H3296M3273 2045.500H3296M3280.500 2030V2053M3288.500 2030V2053" fill="none" stroke="#222" stroke-width="2.200"/>
<rect x="3354" y="2030" width="25" height="23" fill="none" stroke="#222" stroke-width="2.500"/><path d="M3361 2035H3372V2048H3361ZM3361 2039H3372M3361 2043.500H3372" fill="none" stroke="#444" stroke-width="1.500"/>
<rect x="3433" y="2030" width="25" height="23" fill="none" stroke="#222" stroke-width="2.500"/><path d="M3441 2030V2042H3458M3449 2030V2042" fill="none" stroke="#222" stroke-width="2"/>
<path d="M3498 2043H3514M3741 2034V2052M3733 2043H3749" stroke="#555" stroke-width="1.800"/>
<rect x="3525" y="2041.500" width="197" height="3.500" fill="#666"/><rect x="3619" y="2032" width="10" height="22" fill="#666"/>
<text x="3776" y="2052" textLength="48" style="font-size:22px;fill:#555">100%</text>
</svg>
</body></html>
